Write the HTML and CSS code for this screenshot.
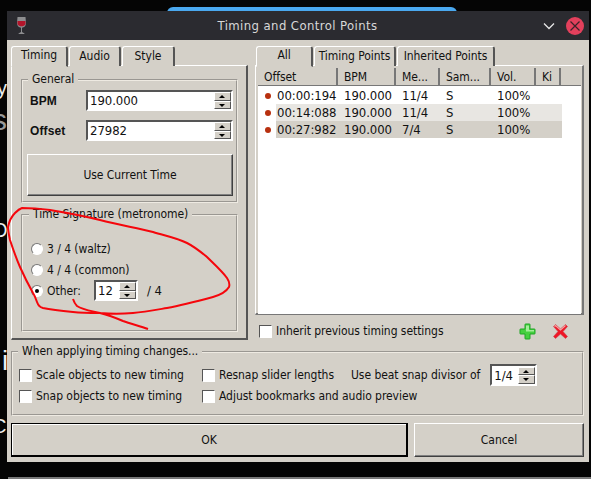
FILE: index.html
```html
<!DOCTYPE html>
<html lang="en">
<head>
<meta charset="utf-8">
<title>Timing and Control Points</title>
<link rel="stylesheet" href="styles.css">
</head>
<body>
<div class="desk-strip"></div>
<div class="desk-bottom"></div>
<span class="desk-letter l1">y</span>
<span class="desk-letter l2">s</span>
<span class="desk-letter l3">O</span>
<span class="desk-letter l4">i</span>
<span class="desk-letter l5">C</span>
<div class="window">
  <header class="titlebar">
    <svg class="wine" width="11" height="19" viewBox="0 0 11 19"><path d="M1.500 1H9.500L10 7C10 10 8 11.500 6 11.700V16L8.500 17.500V18H2.500V17.500L5 16V11.700C3 11.500 1 10 1 7Z" fill="#8d8d8f"/><path d="M1.500 5H9.500L9.500 8C9 9.500 7 10.300 5.500 10.300C4 10.300 2 9.500 1.500 8Z" fill="#b3152b"/></svg>
    <h1 class="title">Timing and Control Points</h1>
    <svg class="chevron" width="12" height="8" viewBox="0 0 12 8"><path d="M1 1.500L6 6.500L11 1.500" fill="none" stroke="#e6e6e6" stroke-width="1.300"/></svg>
    <span class="close"><svg width="10" height="10" viewBox="0 0 10 10"><path d="M.5 .5L9.500 9.500M9.500 .5L.5 9.500" stroke="#3b2228" stroke-width="1.200"/></svg></span>
  </header>
  <main class="content">
    <div class="top">
      <section class="left">
        <div class="tabs">
          <span class="tab active t-timing">Timing</span>
          <span class="tab t-audio">Audio</span>
          <span class="tab t-style">Style</span>
        </div>
        <div class="panel left-panel">
          <fieldset class="group general">
            <legend>General</legend>
            <div class="field">
              <label class="bold">BPM</label>
              <div class="spin wide"><span class="val">190.000</span><span class="btns"><i class="up"></i><i class="down"></i></span></div>
            </div>
            <div class="field">
              <label class="bold">Offset</label>
              <div class="spin wide"><span class="val">27982</span><span class="btns"><i class="up"></i><i class="down"></i></span></div>
            </div>
            <button class="btn use-time">Use Current Time</button>
          </fieldset>
          <fieldset class="group signature">
            <legend>Time Signature (metronome)</legend>
            <label class="radio-row"><input type="radio" name="sig" class="radio">3 / 4 (waltz)</label>
            <label class="radio-row"><input type="radio" name="sig" class="radio">4 / 4 (common)</label>
            <div class="radio-row other">
              <input type="radio" name="sig" class="radio" checked>
              <span class="other-label">Other:</span>
              <div class="spin small"><span class="val">12</span><span class="btns"><i class="up"></i><i class="down"></i></span></div>
              <span class="per">/ 4</span>
            </div>
          </fieldset>
        </div>
      </section>
      <section class="right">
        <div class="tabs">
          <span class="tab active t-all">All</span>
          <span class="tab t-points">Timing Points</span>
          <span class="tab t-inherited">Inherited Points</span>
        </div>
        <div class="panel right-panel">
          <div class="list">
            <div class="row head">
              <span>Offset</span><span>BPM</span><span>Me...</span><span>Sam...</span><span>Vol.</span><span>Ki</span><span></span>
            </div>
            <div class="row item"><span class="c-off"><b class="dot"></b><em>00:00:194</em></span><span>190.000</span><span>11/4</span><span>S</span><span>100%</span><span></span></div>
            <div class="row item alt"><span class="c-off"><b class="dot"></b><em>00:14:088</em></span><span>190.000</span><span>11/4</span><span>S</span><span>100%</span><span></span></div>
            <div class="row item sel"><span class="c-off"><b class="dot"></b><em>00:27:982</em></span><span>190.000</span><span>7/4</span><span>S</span><span>100%</span><span></span></div>
          </div>
        </div>
        <div class="inherit">
          <label class="check-row"><input type="checkbox" class="check">Inherit previous timing settings</label>
          <svg class="icon-plus" width="17" height="17" viewBox="0 0 17 17"><path d="M6.500 1H10.500Q11 1 11 1.500V6H15.500Q16 6 16 6.500V10.500Q16 11 15.500 11H11V15.500Q11 16 10.500 16H6.500Q6 16 6 15.500V11H1.500Q1 11 1 10.500V6.500Q1 6 1.500 6H6V1.500Q6 1 6.500 1Z" fill="#45d03f" stroke="#1fa524" stroke-width="1"/><path d="M7 2.500H10V7H15V8.500H7Z" fill="#a5ee9b"/></svg>
          <svg class="icon-x" width="17" height="17" viewBox="0 0 17 17"><path d="M1.500 3.500L3.500 1.500L8.500 6L13.500 1.500L15.500 3.500L11 8.500L15.500 13.500L13.500 15.500L8.500 11L3.500 15.500L1.500 13.500L6 8.500Z" fill="#ef1626" stroke="#c9404a" stroke-width=".6"/><path d="M2.500 3.500L3.500 2.500L8.500 7L13.500 2.500" fill="none" stroke="#f2a3a3" stroke-width="1.200"/></svg>
        </div>
      </section>
    </div>
    <fieldset class="group applying">
      <legend>When applying timing changes...</legend>
      <div class="apply-grid">
        <label class="check-row"><input type="checkbox" class="check">Scale objects to new timing</label>
        <label class="check-row"><input type="checkbox" class="check">Resnap slider lengths</label>
        <div class="divisor"><span>Use beat snap divisor of</span><div class="spin tiny"><span class="val">1/4</span><span class="btns"><i class="up"></i><i class="down"></i></span></div></div>
        <label class="check-row"><input type="checkbox" class="check">Snap objects to new timing</label>
        <label class="check-row span2"><input type="checkbox" class="check">Adjust bookmarks and audio preview</label>
      </div>
    </fieldset>
    <div class="actions">
      <button class="btn ok">OK</button>
      <button class="btn cancel">Cancel</button>
    </div>
  </main>
</div>
<svg class="scribble" width="591" height="479" viewBox="0 0 591 479"><path d="M22 208C32 208 42 209 50 210C68 213 84 216 100 220C120 225 137 228 153 232C166 236 177 238 187 243C195 247 201 252 207 257C214 264 222 271 227 278C229 281 230 284 229 287C226 292 220 295 213 297C198 301 183 305 167 308C155 310 144 312 133 313C122 314 111 314 100 313C91 313 82 313 73 312C62 311 52 310 43 308C39 307 38 305 37 302C36 299 35 296 33 293C28 284 24 276 20 267C16 258 13 249 10 240C9 235 8 231 8 227C9 222 11 217 15 213C17 211 19 209 22 208Z M73 299C74 302 75 304 77 306C83 310 92 311 100 313C108 315 116 318 123 321C131 324 140 326 148 329" fill="none" stroke="#f5060c" stroke-width="2"/></svg>
</body>
</html>
```
FILE: styles.css
```css
* { box-sizing: border-box; }
html, body { margin: 0; height: 100%; }
body {
  width: 591px;
  height: 479px;
  overflow: hidden;
  position: relative;
  background: #050505;
  padding: 11px 2px 0 7px;
  font: 12px "DejaVu Sans Condensed", "DejaVu Sans", sans-serif;
  letter-spacing: -.05px;
  color: #111;
}
.desk-strip { position: absolute; left: 167px; top: 7px; width: 290px; height: 6px; background: #4aa8ef; border-radius: 6px 6px 0 0; }
.desk-bottom { position: absolute; left: 8px; right: 0; top: 477px; height: 2px; background: #7a7a7a; }
.desk-letter { position: absolute; color: #eee; font: 20px "Liberation Sans", sans-serif; letter-spacing: 0; }
.l1 { top: 77px; left: -3px; }
.l2 { top: 103px; left: -8px; font-size: 30px; color: #9a9a9a; }
.l3 { top: 219px; left: -8px; }
.l4 { top: 345px; left: 2px; font-size: 28px; }
.l5 { top: 415px; left: -8px; }

.window { position: relative; width: 582px; height: 451px; background: #d4d0c8; display: flex; flex-direction: column; }
.titlebar { height: 29px; flex: none; background: #2b2b30; display: flex; align-items: center; padding: 0 5px 0 9px; color: #dcdcdc; }
.wine { flex: none; }
.title { flex: 1; margin: 0; text-align: center; font: 400 13px "DejaVu Sans Condensed", "DejaVu Sans", sans-serif; color: #d8d8d8; padding-left: 25px; letter-spacing: .4px; }
.chevron { flex: none; margin-right: 11px; }
.close { width: 18px; height: 18px; border-radius: 50%; background: #e3405c; display: flex; align-items: center; justify-content: center; flex: none; }

.content { flex: 1; padding: 4px 5px 0 4px; display: flex; flex-direction: column; }
.top { display: flex; height: 296px; flex: none; gap: 7px; }
.left { width: 237px; flex: none; display: flex; flex-direction: column; }
.right { width: 329px; flex: none; display: flex; flex-direction: column; }

.tabs { height: 22px; display: flex; align-items: flex-end; flex: none; position: relative; z-index: 1; padding-left: 1px; margin-bottom: -1px; }
.tab {
  height: 20px; display: flex; align-items: center; justify-content: center; padding-bottom: 2px;
  background: #d4d0c8; border: 1px solid #fff; border-bottom: 0; border-right: 2px solid #555;
  border-radius: 3px 3px 0 0; margin-right: 1px; white-space: nowrap;
}
.tab.active { height: 21px; border-bottom: 1px solid #d4d0c8; margin-bottom: -1px; padding-bottom: 4px; }
.t-timing { width: 57px; margin-left: -1px; }
.t-audio { width: 52px; }
.t-style { width: 53px; }
.t-all { width: 57px; }
.t-points { width: 82px; }
.t-inherited { width: 98px; }

.panel { border: 1px solid #fff; border-right: 2px solid #555; border-bottom: 2px solid #555; background: #d4d0c8; }
.left-panel { flex: 1; padding: 7px 8px 6px 9px; display: flex; flex-direction: column; gap: 5px; }
.right-panel { height: 250px; flex: none; border-right-color: #777; border-bottom-color: #777; padding: 1px 1px 0 2px; }

.group { margin: 0; border: 2px groove #eeeae2; padding: 0; min-width: 0; }
.group legend { padding: 0 4px; line-height: 13px; }
.general { height: 130px; flex: none; padding: 4px 3px 0 4px; }
.general legend { margin-left: 1px; }
.signature { height: 124px; flex: none; padding: 17px 0 0 8px; }
.signature legend { margin-left: -2px; }

.field { display: flex; align-items: center; height: 21px; margin-bottom: 9px; padding-left: 3px; }
.bold { font: 700 12px "Liberation Sans", sans-serif; width: 56px; flex: none; letter-spacing: .1px; }
.spin {
  display: flex; align-items: center; background: #fff;
  border: 2px solid; border-color: #555 #fff #fff #555;
  height: 21px;
}
.wide { flex: 1; }
.val { flex: 1; padding-left: 2px; font-size: 13px; line-height: 17px; }
.btns { width: 17px; height: 17px; display: flex; flex-direction: column; flex: none; }
.btns i { flex: 1; background: #d4d0c8; border: 1px solid; border-color: #fff #555 #555 #fff; position: relative; display: block; }
.btns i::after { content: ""; position: absolute; left: 4px; top: 2px; border: 3px solid transparent; }
.up::after { border-top-width: 0 !important; border-bottom: 3px solid #000 !important; }
.down::after { border-bottom-width: 0 !important; border-top: 3px solid #000 !important; }

.btn {
  background: #d4d0c8; border: 1px solid; border-color: #fff #404040 #404040 #fff;
  box-shadow: inset -1px -1px 0 #808080; font: inherit; color: inherit; padding: 0; letter-spacing: inherit;
}
.use-time { display: block; width: 206px; height: 42px; margin-top: 13px; }

.radio-row { display: flex; align-items: center; height: 21px; }
.radio, .check { appearance: none; margin: 0; flex: none; background: #fff; }
.radio {
  width: 12px; height: 12px; border-radius: 50%; margin-right: 4px;
  border: 1px solid #777; border-right-color: #fff; border-bottom-color: #fff; position: relative;
}
.radio:checked::after { content: ""; position: absolute; left: 3px; top: 3px; width: 4px; height: 4px; background: #000; border-radius: 50%; }
.other-label { width: 47px; }
.small { width: 44px; height: 21px; }
.per { margin-left: 9px; font-size: 13px; }

.list { background: #fff; height: 247px; }
.row { display: grid; grid-template-columns: 80px 58px 44px 51px 45px 25px 1fr; align-items: center; }
.head { height: 19px; background: #d4d0c8; }
.head span { height: 18px; border-right: 2px solid #777; border-bottom: 1px solid #777; padding-left: 6px; line-height: 18px; }
.head span:last-child { border-right: 0; }
.item { height: 17px; font-size: 13px; }
.item:nth-child(2) { margin-top: 1px; }
.item span { padding-left: 6px; white-space: nowrap; }
.item span.c-off { padding-left: 7px; display: flex; align-items: center; }
.c-off em { font-style: normal; padding: 0 0 0 6px; }
.dot { width: 6px; height: 6px; border-radius: 50%; background: #b8300f; flex: none; }
.alt { background: linear-gradient(to right, #fff 18px, #e8e6e2 18px, #e8e6e2 304px, #fff 304px); }
.sel { background: linear-gradient(to right, #fff 18px, #d4d0c8 18px, #d4d0c8 304px, #fff 304px); }

.inherit { display: flex; align-items: center; flex: 1; padding: 7px 0 0 4px; }
.check-row { display: flex; align-items: center; white-space: nowrap; }
.check { width: 13px; height: 13px; margin-right: 4px; border: 1px solid #555; border-right-color: #fff; border-bottom-color: #fff; }
.inherit .check-row { flex: 1; }
.icon-plus { flex: none; margin-right: 16px; }
.icon-x { flex: none; margin-right: 15px; }

.applying { height: 71px; flex: none; margin-top: 5px; padding: 7px 0 0 6px; }
.applying legend { margin-left: -1px; }
.apply-grid { display: grid; grid-template-columns: 183px 149px 1fr; row-gap: 1px; align-items: center; }
.apply-grid .check-row, .divisor { height: 20px; }
.span2 { grid-column: span 2; }
.divisor { display: flex; align-items: center; }
.tiny { width: 47px; height: 22px; margin-left: 10px; }

.actions { display: flex; gap: 6px; margin-top: 7px; }
.ok { width: 397px; height: 34px; border: 1px solid #000; border-right-width: 2px; border-bottom-width: 2px; box-shadow: inset 1px 1px 0 #fff; }
.cancel { width: 170px; height: 34px; }

.scribble { position: absolute; left: 0; top: 0; pointer-events: none; }
```
